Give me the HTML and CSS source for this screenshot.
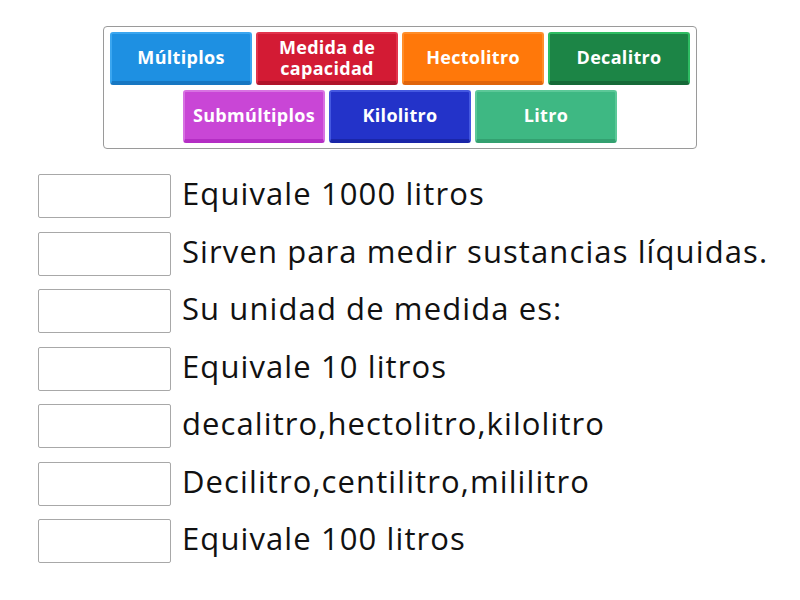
FILE: index.html
```html
<!DOCTYPE html>
<html lang="es">
<head>
    <meta charset="UTF-8">
    <title>Medida de capacidad</title>
    <link rel="stylesheet" href="styles.css">
</head>
<body>

    <div class="bank">
        <div class="bank-row">
            <div class="tile blue">Múltiplos</div>
            <div class="tile red">Medida de capacidad</div>
            <div class="tile orange">Hectolitro</div>
            <div class="tile green">Decalitro</div>
        </div>
        <div class="bank-row">
            <div class="tile pink">Submúltiplos</div>
            <div class="tile navy">Kilolitro</div>
            <div class="tile mint">Litro</div>
        </div>
    </div>

    <ul class="items">
        <li><span class="slot"></span><span class="label">Equivale 1000 litros</span></li>
        <li><span class="slot"></span><span class="label">Sirven para medir sustancias líquidas.</span></li>
        <li><span class="slot"></span><span class="label">Su unidad de medida es:</span></li>
        <li><span class="slot"></span><span class="label">Equivale 10 litros</span></li>
        <li><span class="slot"></span><span class="label">decalitro,hectolitro,kilolitro</span></li>
        <li><span class="slot"></span><span class="label">Decilitro,centilitro,mililitro</span></li>
        <li><span class="slot"></span><span class="label">Equivale 100 litros</span></li>
    </ul>

</body>
</html>
```

FILE: styles.css
```css
body {
    margin: 0;
    font-family: "Open Sans", "Noto Sans", sans-serif;
    background-color: white;
}

/* Word bank */
.bank {
    width: 580px;
    margin: 26px auto 0;
    padding: 5px 6px;
    border: 1px solid #9a9a9a;
    border-radius: 4px;
    display: flex;
    flex-direction: column;
    gap: 5px;
}
.bank-row {
    display: flex;
    justify-content: center;
    gap: 4px;
}
.tile {
    width: 142px;
    height: 53px;
    box-sizing: border-box;
    display: flex;
    align-items: center;
    justify-content: center;
    text-align: center;
    color: white;
    font-weight: bold;
    font-size: 18px;
    letter-spacing: 0.3px;
    line-height: 21px;
    padding: 0 12px;
    border-radius: 3px;
    border: 2px solid;
    border-bottom-width: 4px;
}

.blue { background-color: #1e90e2; border-color: #3aa6f0 #3aa6f0 #1777c2; }
.red { background-color: #d31b34; border-color: #e2344c #e2344c #b0142a; }
.orange { background-color: #ff780a; border-color: #ff8e2a #ff8e2a #e0640a; }
.green { background-color: #1c8546; border-color: #2ebc62 #2ebc62 #166a38; }
.pink { background-color: #c946d6; border-color: #d872e2 #d872e2 #b42ec4; }
.navy { background-color: #2333c9; border-color: #4458e0 #4458e0 #1a26a8; }
.mint { background-color: #3eb883; border-color: #5cc898 #5cc898 #33a070; }

/* Matching rows */
.items {
    list-style: none;
    margin: 25px 0 0 38px;
    padding: 0;
    display: flex;
    flex-direction: column;
    gap: 13.5px;
}
.items li {
    display: flex;
    align-items: center;
    gap: 11px;
}
.slot {
    width: 133px;
    height: 44px;
    box-sizing: border-box;
    border: 1px solid #a8a8a8;
    border-radius: 2px;
    flex-shrink: 0;
}
.label {
    font-size: 31px;
    letter-spacing: 1.1px;
    line-height: 40px;
    color: #111;
    margin-top: -6px;
}
```
